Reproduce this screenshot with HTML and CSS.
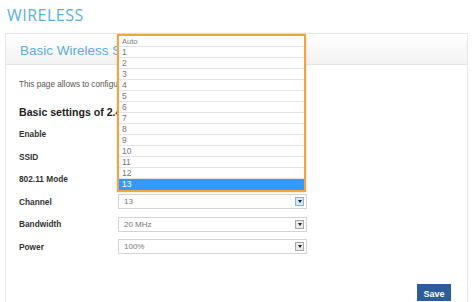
FILE: index.html
```html
<!DOCTYPE html>
<html>
<head>
<meta charset="utf-8">
<link rel="stylesheet" href="styles.css">
</head>
<body>
<h1 class="title">WIRELESS</h1>
<div class="panel">
  <div class="panel-head">Basic Wireless Settings</div>
  <div class="panel-body">
    <p class="desc">This page allows to configure the basic wireless settings of the router.</p>
    <h2 class="subhead">Basic settings of 2.4 GHz</h2>
    <div class="form">
      <div class="label">Enable</div><div class="ctrl"></div>
      <div class="label">SSID</div><div class="ctrl"></div>
      <div class="label">802.11 Mode</div><div class="ctrl"></div>
      <div class="label">Channel</div>
      <div class="ctrl"><div class="select"><span>13</span><span class="arrow active"><i></i></span></div></div>
      <div class="label">Bandwidth</div>
      <div class="ctrl"><div class="select"><span>20 MHz</span><span class="arrow"><i></i></span></div></div>
      <div class="label">Power</div>
      <div class="ctrl"><div class="select"><span>100%</span><span class="arrow"><i></i></span></div></div>
    </div>
    <div class="actions"><button class="save">Save</button></div>
  </div>
</div>
<ul class="dropdown">
  <li class="auto">Auto</li>
  <li>1</li><li>2</li><li>3</li><li>4</li><li>5</li><li>6</li><li>7</li>
  <li>8</li><li>9</li><li>10</li><li>11</li><li>12</li>
  <li class="sel">13</li>
</ul>
</body>
</html>
```
FILE: styles.css
```css
html, body { margin: 0; padding: 0; background: #fff; }
body {
  font-family: "Liberation Sans", Arial, sans-serif;
  width: 474px; height: 302px; overflow: hidden; position: relative;
}
.title {
  margin: 0; padding: 5px 0 0 7px; height: 33px; box-sizing: border-box;
  font-family: "Open Sans", "Liberation Sans", sans-serif;
  font-weight: 400; font-size: 16px; line-height: 20px; color: #5aaedc;
  letter-spacing: 0.5px;
}
.panel {
  margin-left: 5px; width: 463px; height: 269px; box-sizing: border-box;
  border: 1px solid #e6e6e6; border-bottom: none; overflow: hidden;
}
.panel-head {
  height: 31px; box-sizing: border-box; padding: 9px 0 0 14px;
  background: linear-gradient(#ffffff, #f2f2f2);
  border-bottom: 1px solid #e4e4e4;
  font-size: 13.5px; line-height: 16px; color: #5aaedc; white-space: nowrap; overflow: hidden;
}
.panel-body { padding: 0 15px 0 13px; }
.desc {
  margin: 14px 0 0; font-size: 8.2px; line-height: 12px; color: #555; white-space: nowrap;
}
.subhead {
  margin: 13px 0 0; font-size: 10.6px; line-height: 16px; font-weight: 700; color: #222; white-space: nowrap;
}
.form {
  margin-top: 3px;
  display: grid; grid-template-columns: 99px 189px; grid-auto-rows: 22.5px; align-items: center;
}
.label { font-size: 8.3px; font-weight: 700; color: #333; }
.select {
  height: 15px; box-sizing: border-box; border: 1px solid #d4d4d4; background: #fff;
  display: flex; align-items: center; justify-content: space-between;
  padding: 0 2px 0 5px; font-size: 8px; color: #777;
}
.arrow {
  width: 9px; height: 9px; box-sizing: border-box; border: 1px solid #a9a9a9; background: #e9e9e9;
  display: flex; align-items: center; justify-content: center;
}
.arrow.active { background: #d3e8f8; border-color: #8fb4d4; }
.arrow i {
  width: 0; height: 0; border-left: 2.5px solid transparent; border-right: 2.5px solid transparent;
  border-top: 3px solid #222;
}
.actions { display: flex; justify-content: flex-end; margin-top: 26px; padding-right: 1px; }
.save {
  width: 34px; height: 17px; border: none; background: #2b5d9c; color: #fff;
  font-family: "Liberation Sans", Arial, sans-serif; font-weight: 700; font-size: 9px;
  padding: 0; padding-top: 2px;
}
.dropdown {
  position: absolute; left: 117px; top: 34px; width: 189px; margin: 0; padding: 0;
  list-style: none; background: #fff; box-sizing: border-box;
  border: 2px solid #f0a545; box-shadow: 0 0 2px rgba(240,165,69,0.6);
}
.dropdown li {
  height: 11px; box-sizing: border-box; border-bottom: 1px solid #e4e4e4;
  padding-left: 3px; font-size: 8.5px; line-height: 11px; color: #777;
}
.dropdown li.auto { font-size: 7.5px; }
.dropdown li.sel { background: #3399ff; color: #fff; border-bottom: none; }
```
